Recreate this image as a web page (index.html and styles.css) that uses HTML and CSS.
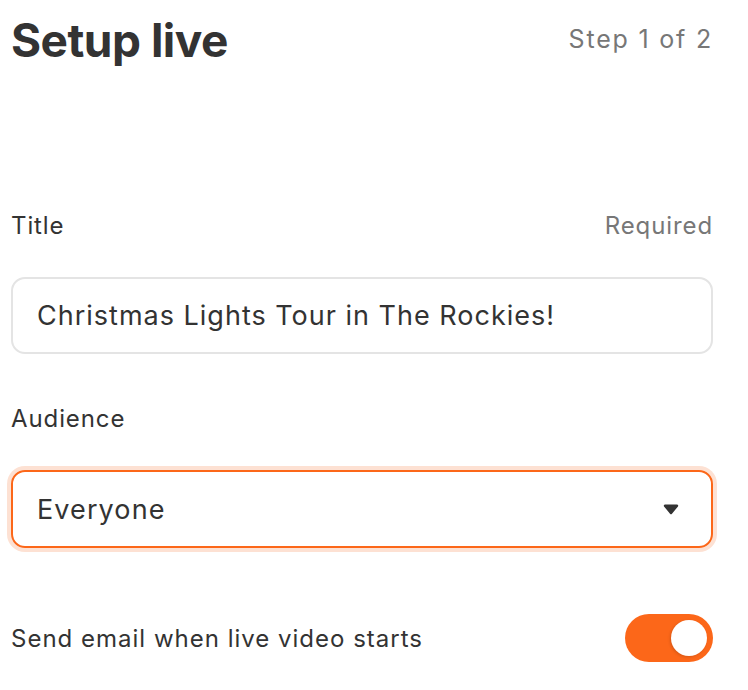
FILE: index.html
```html
<!DOCTYPE html>
<html lang="en">
<head>
    <meta charset="UTF-8">
    <meta name="viewport" content="width=device-width, initial-scale=1.0">
    <title>Setup live</title>
    <link rel="stylesheet" href="styles.css">
</head>
<body>
    <div class="panel">
        <header class="top">
            <h1>Setup live</h1>
            <span class="step">Step 1 of 2</span>
        </header>

        <div class="field">
            <div class="label-row">
                <label for="title">Title</label>
                <span class="hint">Required</span>
            </div>
            <input id="title" class="input" type="text" value="Christmas Lights Tour in The Rockies!">
        </div>

        <div class="field">
            <div class="label-row">
                <label for="audience">Audience</label>
            </div>
            <div class="select focused">
                <span id="audience">Everyone</span>
                <svg class="caret" width="16" height="12" viewBox="0 0 16 12">
                    <path d="M2 1.5h12a1.2 1.2 0 0 1 1 1.9l-6 7.3a1.3 1.3 0 0 1-2 0l-6-7.3a1.2 1.2 0 0 1 1-1.9z" fill="#333"/>
                </svg>
            </div>
        </div>

        <div class="toggle-row">
            <span>Send email when live video starts</span>
            <button class="switch on" type="button" aria-pressed="true"><span class="knob"></span></button>
        </div>
    </div>
</body>
</html>
```

FILE: styles.css
```css
body {
    margin: 0;
    font-family: Inter, "Noto Sans", sans-serif;
    color: #333;
    background: #fff;
}
.panel {
    width: 702px;
    padding-left: 11px;
}
.top {
    display: flex;
    justify-content: space-between;
    align-items: center;
    height: 80px;
}
h1 {
    margin: 0;
    font-size: 46px;
    font-weight: 700;
    letter-spacing: -0.5px;
    color: #333;
}
.step {
    font-size: 25px;
    letter-spacing: 1.8px;
    color: #777;
    margin-top: -2px;
}
.field {
    display: flex;
    flex-direction: column;
}
.field:first-of-type {
    margin-top: 125px;
}
.label-row {
    display: flex;
    justify-content: space-between;
    align-items: center;
    height: 40px;
    font-size: 24px;
    letter-spacing: 0.9px;
}
.hint {
    color: #777;
}
.input {
    margin-top: 32px;
    height: 77px;
    box-sizing: border-box;
    border: 2px solid #e4e4e4;
    border-radius: 14px;
    padding: 0 24px;
    font-family: inherit;
    font-size: 27px;
    letter-spacing: 1px;
    color: #333;
    outline: none;
}
.field + .field {
    margin-top: 44px;
}
.select {
    margin-top: 32px;
    height: 78px;
    box-sizing: border-box;
    border: 2px solid #fc6719;
    border-radius: 14px;
    box-shadow: 0 0 0 4px #fde1d3;
    padding: 0 32px 0 24px;
    display: flex;
    justify-content: space-between;
    align-items: center;
    font-size: 27px;
    letter-spacing: 1.1px;
}
.toggle-row {
    display: flex;
    justify-content: space-between;
    align-items: center;
    margin-top: 66px;
    font-size: 24px;
    letter-spacing: 1px;
}
.switch {
    width: 88px;
    height: 48px;
    border: none;
    border-radius: 24px;
    background: #fc6719;
    padding: 0 6px;
    display: flex;
    align-items: center;
    cursor: pointer;
}
.switch.on {
    justify-content: flex-end;
}
.knob {
    width: 36px;
    height: 36px;
    border-radius: 50%;
    background: #fff;
    box-shadow: -1px 1px 3px rgba(0, 0, 0, 0.15);
}
```
